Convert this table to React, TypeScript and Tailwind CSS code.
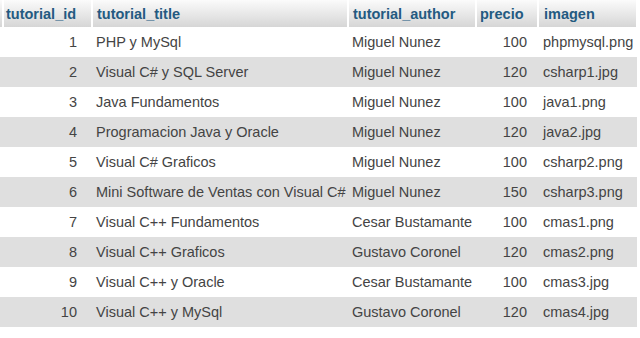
const rows: [number, string, string, number, string][] = [
  [1, "PHP y MySql", "Miguel Nunez", 100, "phpmysql.png"],
  [2, "Visual C# y SQL Server", "Miguel Nunez", 120, "csharp1.jpg"],
  [3, "Java Fundamentos", "Miguel Nunez", 100, "java1.png"],
  [4, "Programacion Java y Oracle", "Miguel Nunez", 120, "java2.jpg"],
  [5, "Visual C# Graficos", "Miguel Nunez", 100, "csharp2.png"],
  [6, "Mini Software de Ventas con Visual C#", "Miguel Nunez", 150, "csharp3.png"],
  [7, "Visual C++ Fundamentos", "Cesar Bustamante", 100, "cmas1.png"],
  [8, "Visual C++ Graficos", "Gustavo Coronel", 120, "cmas2.png"],
  [9, "Visual C++ y Oracle", "Cesar Bustamante", 100, "cmas3.jpg"],
  [10, "Visual C++ y MySql", "Gustavo Coronel", 120, "cmas4.jpg"],
];

const th =
  "h-[27px] pt-[2px] border-r-2 border-white bg-gradient-to-b from-[#fbfbfb] to-[#d6d6d6] text-left font-bold text-[#235a81] align-middle";

export default function App() {
  return (
    <div className="h-[338px] w-[640px] overflow-hidden bg-white font-['Liberation_Sans',Arial,sans-serif] text-[14.5px] text-[#444]">
      <table className="table-fixed border-collapse">
        <colgroup>
          <col className="w-[3px]" />
          <col className="w-[89px]" />
          <col className="w-[256px]" />
          <col className="w-[128px]" />
          <col className="w-[62px]" />
          <col className="w-[99px]" />
        </colgroup>
        <thead>
          <tr>
            <th className={th}></th>
            <th className={`${th} pl-[2px]`}>tutorial_id</th>
            <th className={`${th} pl-[4px]`}>tutorial_title</th>
            <th className={`${th} pl-[4px]`}>tutorial_author</th>
            <th className={`${th} pl-[3px]`}>precio</th>
            <th className={`${th} border-r-0 pl-[5px]`}>imagen</th>
          </tr>
        </thead>
        <tbody>
          {rows.map(([id, title, author, price, img], i) => (
            <tr key={id} className={i % 2 === 1 ? "bg-[#dfdfdf]" : "bg-white"}>
              <td className="h-[30px]"></td>
              <td className="pt-[2px] pr-[15px] text-right whitespace-nowrap">{id}</td>
              <td className="pt-[2px] pl-[4px] whitespace-nowrap">{title}</td>
              <td className="pt-[2px] pl-[4px] whitespace-nowrap">{author}</td>
              <td className="pt-[2px] pr-[11px] text-right whitespace-nowrap">{price}</td>
              <td className="pt-[2px] pl-[5px] whitespace-nowrap">{img}</td>
            </tr>
          ))}
        </tbody>
      </table>
    </div>
  );
}
